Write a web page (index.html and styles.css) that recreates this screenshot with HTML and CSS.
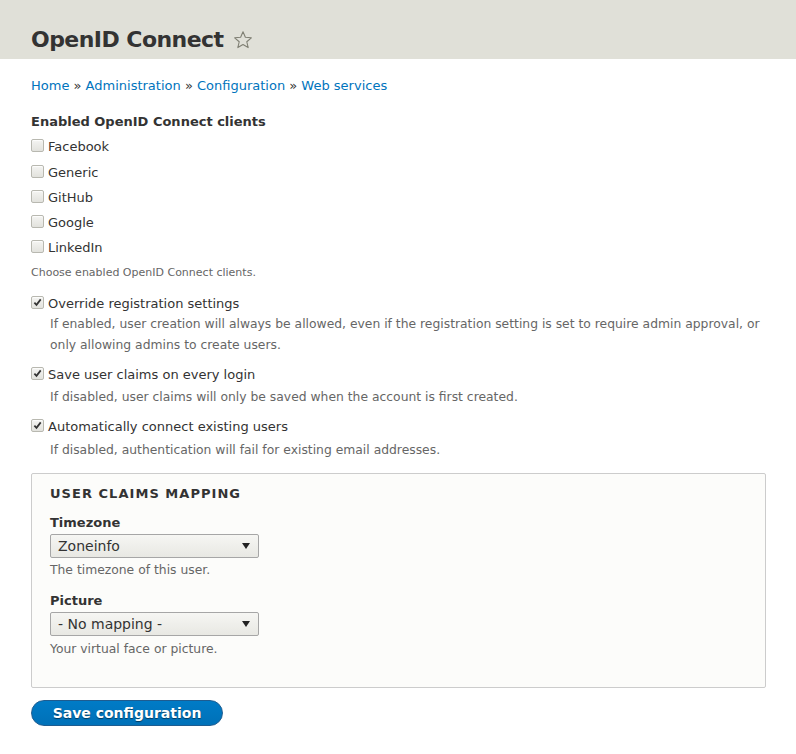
FILE: index.html
```html
<!DOCTYPE html>
<html>
<head>
<meta charset="utf-8">
<link rel="stylesheet" href="styles.css">
</head>
<body>
<header class="page-header">
  <h1 class="page-title">OpenID Connect
    <svg class="star" width="20" height="20" viewBox="0 0 24 24"><path d="M12 2.2l2.85 6.6 7.15.6-5.45 4.7 1.65 7-6.2-3.75-6.2 3.75 1.65-7L2 9.4l7.15-.6z" fill="none" stroke="#7f7f73" stroke-width="1.3" stroke-linejoin="round"/></svg>
  </h1>
</header>
<main class="content">
  <nav class="breadcrumb">
    <a href="#">Home</a> » <a href="#">Administration</a> » <a href="#">Configuration</a> » <a href="#">Web services</a>
  </nav>

  <div class="group">
    <div class="group-label">Enabled OpenID Connect clients</div>
    <div class="check-row"><span class="cb"></span><span class="cb-label">Facebook</span></div>
    <div class="check-row"><span class="cb"></span><span class="cb-label">Generic</span></div>
    <div class="check-row"><span class="cb"></span><span class="cb-label">GitHub</span></div>
    <div class="check-row"><span class="cb"></span><span class="cb-label">Google</span></div>
    <div class="check-row"><span class="cb"></span><span class="cb-label">LinkedIn</span></div>
    <div class="description group-desc">Choose enabled OpenID Connect clients.</div>
  </div>

  <div class="option first">
    <div class="check-row"><span class="cb checked"><svg viewBox="0 0 12 12" width="11" height="11"><path d="M2.6 6.2l2.3 2.4 4.6-6" fill="none" stroke="#333" stroke-width="1.9"/></svg></span><span class="cb-label">Override registration settings</span></div>
    <div class="description opt-desc">If enabled, user creation will always be allowed, even if the registration setting is set to require admin approval, or only allowing admins to create users.</div>
  </div>
  <div class="option">
    <div class="check-row"><span class="cb checked"><svg viewBox="0 0 12 12" width="11" height="11"><path d="M2.6 6.2l2.3 2.4 4.6-6" fill="none" stroke="#333" stroke-width="1.9"/></svg></span><span class="cb-label">Save user claims on every login</span></div>
    <div class="description opt-desc">If disabled, user claims will only be saved when the account is first created.</div>
  </div>
  <div class="option">
    <div class="check-row"><span class="cb checked"><svg viewBox="0 0 12 12" width="11" height="11"><path d="M2.6 6.2l2.3 2.4 4.6-6" fill="none" stroke="#333" stroke-width="1.9"/></svg></span><span class="cb-label">Automatically connect existing users</span></div>
    <div class="description opt-desc last">If disabled, authentication will fail for existing email addresses.</div>
  </div>

  <section class="fieldset">
    <div class="legend">User claims mapping</div>
    <div class="field">
      <div class="field-label">Timezone</div>
      <div class="select"><span>Zoneinfo</span><span class="arrow"></span></div>
      <div class="description field-desc">The timezone of this user.</div>
    </div>
    <div class="field second">
      <div class="field-label">Picture</div>
      <div class="select"><span>- No mapping -</span><span class="arrow"></span></div>
      <div class="description field-desc">Your virtual face or picture.</div>
    </div>
  </section>

  <div class="actions">
    <button class="button-primary">Save configuration</button>
  </div>
</main>
</body>
</html>
```
FILE: styles.css
```css
html, body {
  margin: 0;
  padding: 0;
  background: #fff;
}
body {
  font-family: "DejaVu Sans", Verdana, sans-serif;
  font-size: 13px;
  color: #333;
}
.page-header {
  background: #e0e0d8;
  height: 59px;
  box-sizing: border-box;
  padding: 25px 30px 0 31px;
}
.page-title {
  margin: 0;
  font-size: 22px;
  letter-spacing: -0.55px;
  line-height: 30px;
  font-weight: bold;
  color: #333;
  display: flex;
  align-items: center;
  gap: 9px;
}
.star {
  display: block;
  margin-top: -1px;
}
.content {
  padding: 17px 30px 40px 31px;
}
.breadcrumb {
  line-height: 20px;
  color: #333;
}
.breadcrumb a {
  color: #0074bd;
  text-decoration: none;
}
.group {
  margin-top: 16px;
}
.group-label {
  font-weight: bold;
  line-height: 20px;
}
.check-row {
  display: flex;
  align-items: center;
  height: 20px;
  margin-top: 5.25px;
}
.cb {
  width: 11px;
  height: 11px;
  border: 1px solid #b8b8b0;
  border-radius: 2px;
  background: linear-gradient(#f4f4f2, #e2e2dd);
  box-shadow: inset 0 1px 1px rgba(255,255,255,0.8);
  margin-right: 4px;
  margin-top: -3px;
  display: flex;
  align-items: center;
  justify-content: center;
  flex: none;
}
.cb svg {
  display: block;
}
.cb-label {
  line-height: 20px;
}
.description {
  font-size: 11px;
  color: #666;
}
.group-desc {
  line-height: 16px;
  margin-top: 7px;
}
.option {
  margin-top: 9px;
}
.option.first {
  margin-top: 13px;
}
.option .check-row {
  margin-top: 0;
}
.opt-desc {
  padding-left: 19px;
  line-height: 21px;
  margin-top: 2px;
  font-size: 12.35px;
}
.option.first .opt-desc {
  margin-top: 0;
}
.opt-desc.last {
  margin-top: 3px;
}
.fieldset {
  margin-top: 12px;
  border: 1px solid #ccc;
  border-radius: 2px;
  background: #fcfcfa;
  padding: 10px 18px 30px 18px;
}
.legend {
  font-weight: bold;
  text-transform: uppercase;
  letter-spacing: 0.08em;
  line-height: 20px;
}
.field {
  margin-top: 9px;
}
.field.second {
  margin-top: 13px;
}
.field-label {
  font-weight: bold;
  line-height: 20px;
}
.select {
  margin-top: 1px;
  width: 209px;
  height: 24px;
  box-sizing: border-box;
  border: 1px solid #a6a6a6;
  border-radius: 2px;
  background: linear-gradient(#f6f6f3, #e8e8e3);
  display: flex;
  align-items: center;
  justify-content: space-between;
  padding: 0 8px 0 7px;
  font-size: 14px;
  color: #333;
}
.arrow {
  width: 0;
  height: 0;
  border-left: 4.5px solid transparent;
  border-right: 4.5px solid transparent;
  border-top: 6px solid #222;
}
.field-desc {
  line-height: 16px;
  margin-top: 4px;
  font-size: 12.35px;
}
.field.second .field-desc {
  margin-top: 5px;
}
.actions {
  margin-top: 12px;
}
.button-primary {
  width: 192px;
  height: 26px;
  border: 1px solid #1e5c90;
  border-radius: 20px;
  background: linear-gradient(#007bc6, #0071b8);
  color: #fff;
  font-family: "DejaVu Sans", Verdana, sans-serif;
  font-size: 14px;
  font-weight: bold;
  text-shadow: 0 1px 1px rgba(0,0,0,0.5);
  padding: 0;
}
```
